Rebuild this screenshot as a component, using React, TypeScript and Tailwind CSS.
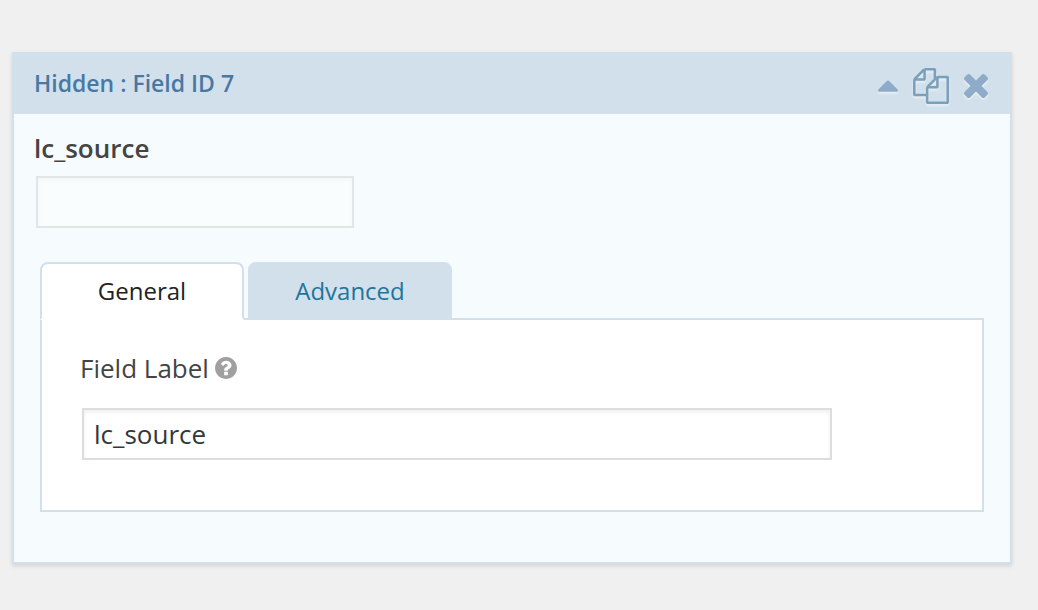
import { useState } from "react";

const TABS = ["General", "Advanced"] as const;
type Tab = (typeof TABS)[number];

function CopyIcon() {
  return (
    <svg viewBox="0 0 1792 1792" className="size-9 fill-[#7ba1ba]" aria-hidden="true">
      <path d="M1696 384q40 0 68 28t28 68v1216q0 40-28 68t-68 28h-960q-40 0-68-28t-28-68v-288h-544q-40 0-68-28t-28-68v-672q0-40 20-88t48-76l408-408q28-28 76-48t88-20h416q40 0 68 28t28 68v328q68-40 128-40h416zm-544 213l-299 299h299v-299zm-640-384l-299 299h299v-299zm196 647l316-316v-416h-384v416q0 40-28 68t-68 28h-416v640h512v-256q0-40 20-88t48-76zm956 804v-1152h-384v416q0 40-28 68t-68 28h-416v640h896z" />
    </svg>
  );
}

function CloseIcon() {
  return (
    <svg viewBox="302 366 1188 1188" className="size-6 fill-[#8eacc9]" aria-hidden="true">
      <path d="M1490 1322q0 40-28 68l-136 136q-28 28-68 28t-68-28l-294-294-294 294q-28 28-68 28t-68-28l-136-136q-28-28-28-68t28-68l294-294-294-294q-28-28-28-68t28-68l136-136q28-28 68-28t68 28l294 294 294-294q28-28 68-28t68 28l136 136q28 28 28 68t-28 68l-294 294 294 294q28 28 28 68z" />
    </svg>
  );
}

function CaretIcon() {
  return (
    <svg viewBox="0 0 1024 576" className="h-3 w-5 fill-[#8eacc9]" aria-hidden="true">
      <path d="M1024 512q0 26-19 45t-45 19h-896q-26 0-45-19t-19-45 19-45l448-448q19-19 45-19t45 19l448 448q19 19 19 45z" />
    </svg>
  );
}

function HelpIcon() {
  return (
    <svg viewBox="128 128 1536 1536" className="size-[22px] fill-[#a0a0a0]" aria-hidden="true">
      <path d="M1024 1376v-192q0-14-9-23t-23-9h-192q-14 0-23 9t-9 23v192q0 14 9 23t23 9h192q14 0 23-9t9-23zm256-672q0-88-55.5-163t-138.5-116-170-41q-243 0-371 213-15 24 8 42l132 100q7 6 19 6 16 0 25-12 53-68 86-92 34-24 86-24 48 0 85.5 26t37.5 59q0 38-20 61t-68 45q-63 28-115.5 86.5t-52.5 125.5v36q0 14 9 23t23 9h192q14 0 23-9t9-23q0-19 21.5-49.5t54.5-49.5q32-18 49-28.5t46-35 44.5-48 28-60.5 12.5-81zm384 192q0 209-103 385.5t-279.5 279.5-385.5 103-385.5-103-279.5-279.5-103-385.5 103-385.5 279.5-279.5 385.5-103 385.5 103 279.5 279.5 103 385.5z" />
    </svg>
  );
}

export default function App() {
  const [open, setOpen] = useState(true);
  const [tab, setTab] = useState<Tab>("General");
  const [label, setLabel] = useState("lc_source");

  return (
    <main className="min-h-screen bg-[#f0f0f0] pt-[52px] pr-[26px] pb-10 pl-3 font-['Open_Sans',sans-serif]">
      <section className="border-2 border-[#d2e0eb] bg-[#f6fbfe] shadow-[0_2px_4px_rgba(0,0,0,0.12)]">
        <header className="flex h-[60px] items-center justify-between bg-[#d2e0ec] pr-[22px] pl-5">
          <h1 className="pb-0.5 text-[23px] font-semibold text-[#4978a3]">Hidden : Field ID 7</h1>
          <div className="flex items-center gap-[15px] pt-1 drop-shadow-[0_2px_1px_rgba(255,255,255,0.5)]">
            <button type="button" aria-label="Collapse" aria-expanded={open} onClick={() => setOpen(!open)} className="cursor-pointer">
              <CaretIcon />
            </button>
            <button type="button" aria-label="Duplicate" className="cursor-pointer"><CopyIcon /></button>
            <button type="button" aria-label="Delete" className="cursor-pointer"><CloseIcon /></button>
          </div>
        </header>

        <div className="flex flex-col items-start px-5 pt-4">
          <label htmlFor="preview" className="text-[26px] leading-9 font-semibold text-[#444]">lc_source</label>
          <input id="preview" type="text" disabled
            className="mt-[10px] ml-[2px] h-[52px] w-[318px] max-w-full border-2 border-[#e3e6e6] bg-[#fafdfe] px-[10px] shadow-[inset_0_2px_4px_rgba(0,0,0,0.03)]" />
        </div>

        {open && (
          <div className="px-[26px] pt-[34px] pb-[50px]">
            <div role="tablist" className="relative -mb-[2px] flex gap-1">
              {TABS.map((t) => (
                <button key={t} type="button" role="tab" id={`tab-${t}`} aria-selected={tab === t} aria-controls="panel" onClick={() => setTab(t)}
                  className={`h-[58px] w-[204px] cursor-pointer rounded-t-lg border-2 border-[#d2e0eb] text-2xl ${tab === t ? "border-b-white bg-white text-[#222]" : "bg-[#d2e0eb] text-[#21759b]"}`}>
                  {t}
                </button>
              ))}
            </div>
            <div role="tabpanel" id="panel" aria-labelledby={`tab-${tab}`} className="min-h-[194px] border-2 border-[#d2e0eb] bg-white px-[38px] pt-[30px] pb-[50px]">
              {tab === "General" && (
                <>
                  <div className="flex items-center gap-1.5">
                    <label htmlFor="field-label" className="text-[26px] leading-9 text-[#444]">Field Label</label>
                    <button type="button" aria-label="Help" className="cursor-help"><HelpIcon /></button>
                  </div>
                  <input id="field-label" type="text" value={label} onChange={(e) => setLabel(e.target.value)}
                    className="mt-[22px] ml-[2px] block h-[52px] w-full max-w-[750px] border-2 border-[#ddd] bg-white px-[10px] text-[26px] text-[#32373c] shadow-[inset_0_2px_4px_rgba(0,0,0,0.07)] outline-none" />
                </>
              )}
            </div>
          </div>
        )}
      </section>
    </main>
  );
}
